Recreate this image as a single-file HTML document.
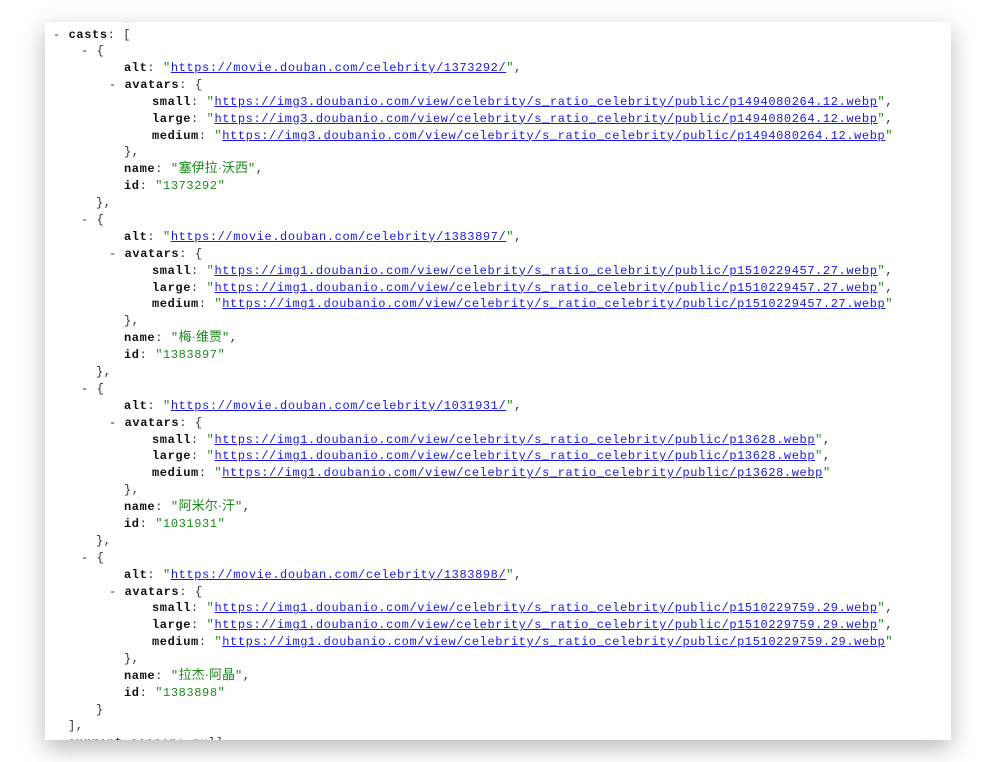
<!DOCTYPE html>
<html><head><meta charset="utf-8"><style>
html,body{margin:0;padding:0;background:#fff;width:993px;height:762px;overflow:hidden}
#p{position:absolute;left:45px;top:22px;width:906px;height:718px;background:#fff;overflow:hidden;box-shadow:0 8px 22px rgba(0,0,0,0.28)}
.l{position:absolute;white-space:pre;font-family:"Liberation Mono","Noto Sans CJK SC",monospace;font-size:12px;letter-spacing:0.6px;line-height:17px;height:17px;color:#333}
b{color:#111}
a{color:#1a1ae0;text-decoration:underline}
.s{color:#1a8a1a}
.c{font-family:"Liberation Sans","Noto Sans CJK SC",sans-serif;letter-spacing:0;font-size:13px;line-height:10px;vertical-align:0}
</style></head><body>
<div id="p">
<div id="c" style="position:absolute;left:-45px;top:-22px;width:993px;height:762px"></div>
</div>
<script>
var c=document.getElementById('c');
function L(y,x,h){var d=document.createElement('div');d.className='l';d.style.top=(y-7)+'px';d.style.left=x+'px';d.innerHTML=h;c.appendChild(d);}
L(17,124,'<b>_</b>              <span style="color:#333">.</span>');
L(34,53,'- <b>casts</b>: [');
var items=[
['1373292','img3','p1494080264.12','塞伊拉·沃西'],
['1383897','img1','p1510229457.27','梅·维贾'],
['1031931','img1','p13628','阿米尔·汗'],
['1383898','img1','p1510229759.29','拉杰·阿晶']];
var lh=16.9;
items.forEach(function(it,k){
 var y=50+k*168.9;
 var u='https://'+it[1]+'.doubanio.com/view/celebrity/s_ratio_celebrity/public/'+it[2]+'.webp';
 L(y,81,'- {');
 L(y+lh,124,'<b>alt</b>: <span class="s">"</span><a>https://movie.douban.com/celebrity/'+it[0]+'/</a><span class="s">"</span>,');
 L(y+2*lh,109,'- <b>avatars</b>: {');
 L(y+3*lh,152,'<b>small</b>: <span class="s">"</span><a>'+u+'</a><span class="s">"</span>,');
 L(y+4*lh,152,'<b>large</b>: <span class="s">"</span><a>'+u+'</a><span class="s">"</span>,');
 L(y+5*lh,152,'<b>medium</b>: <span class="s">"</span><a>'+u+'</a><span class="s">"</span>');
 L(y+6*lh,124,'},');
 L(y+7*lh,124,'<b>name</b>: <span class="s">"<span class="c">'+it[3]+'</span>"</span>,');
 L(y+8*lh,124,'<b>id</b>: <span class="s">"'+it[0]+'"</span>');
 L(y+9*lh,96,k<3?'},':'}');
});
L(725,68,'],');
L(742,68,'<b>current_season</b>: null');
</script>
</body></html>
